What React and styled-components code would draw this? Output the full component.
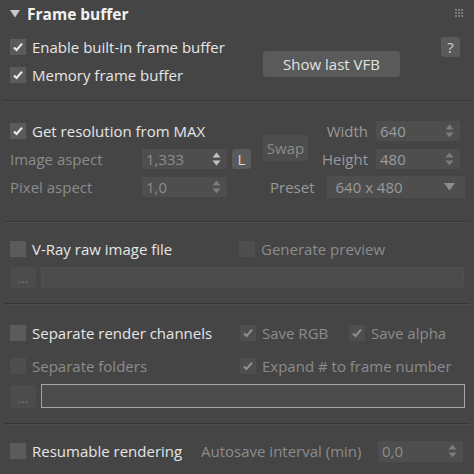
import React from 'react';
import styled, { createGlobalStyle } from 'styled-components';

const Global = createGlobalStyle`
  html, body { margin: 0; padding: 0; background: #454545; }
  body { font-family: "Open Sans", "Noto Sans", sans-serif; }
  * { box-sizing: border-box; }
`;

const Panel = styled.div`
  width: 474px;
  height: 474px;
  overflow: hidden;
  background: #454545;
  color: #e4e4e4;
  font-size: 15px;
  display: flex;
  flex-direction: column;
`;

const Header = styled.div`
  height: 28px;
  display: flex;
  align-items: center;
  padding: 0 10px;
  font-weight: 700;
  font-size: 15.5px;
  color: #f2f2f2;
  gap: 7px;
`;

const Grip = styled.svg`
  margin-left: auto;
  align-self: flex-start;
  margin-top: 9px;
`;

const Separator = styled.div`
  margin: 0 4px;
  height: 2px;
  border-top: 1px solid #363636;
  border-bottom: 1px solid #4d4d4d;
`;

const Section1 = styled.div`
  display: grid;
  grid-template-columns: 253px 137px 1fr;
  grid-template-rows: 28px 28px;
  padding: 5px 14px 11px 10px;
`;

const Section2 = styled.div`
  display: grid;
  grid-template-columns: 132px 85px 24px 12px 55px 58px 87px;
  grid-template-rows: 28px 28px 28px;
  padding: 15px 0 20px 10px;
`;

const Section3 = styled.div`
  display: grid;
  grid-template-rows: 28px 28px;
  padding: 12px 10px 12px 10px;
`;

const Section4 = styled.div`
  display: grid;
  grid-template-rows: 33px 33px 28px;
  padding: 11px 10px 13px 10px;
`;

const Section5 = styled.div`
  display: flex;
  align-items: center;
  height: 28px;
  margin-top: 12px;
  padding: 0 11px 0 10px;
`;

const Row = styled.div`
  display: flex;
  align-items: center;
`;

const CheckLabel = styled.label`
  display: flex;
  align-items: center;
  gap: 6px;
  color: ${p => (p.$disabled ? '#8c8c8c' : '#e6e6e6')};
  white-space: nowrap;
  width: ${p => (p.$w ? p.$w + 'px' : 'auto')};
  grid-column: ${p => p.$col || 'auto'};
  align-self: center;
`;

const Box = styled.span`
  width: 16px;
  height: 16px;
  flex: none;
  background: ${p => (p.$disabled ? '#4e4e4e' : '#5b5b5b')};
  display: flex;
  align-items: center;
  justify-content: center;
`;

const Check = ({ on, disabled }) => (
  <Box $disabled={disabled}>
    {on && (
      <svg width="12" height="12" viewBox="0 0 12 12">
        <path d="M2 6.4 L4.6 9 L10 2.6" fill="none" stroke={disabled ? '#8e8e8e' : '#ececec'} strokeWidth="2.1" />
      </svg>
    )}
  </Box>
);

const CheckBox = ({ on, disabled, children, w, col }) => (
  <CheckLabel $disabled={disabled} $w={w} $col={col}>
    <Check on={on} disabled={disabled} />
    {children}
  </CheckLabel>
);

const Button = styled.div`
  height: ${p => p.$h || 26}px;
  width: ${p => p.$w}px;
  background: ${p => (p.$disabled ? '#4d4d4d' : '#5a5a5a')};
  border-radius: 3px;
  color: ${p => (p.$disabled ? '#8a8a8a' : '#e2e2e2')};
  display: flex;
  align-items: center;
  justify-content: center;
  font-size: 15px;
`;

const ShowButton = styled(Button)`
  grid-column: 2;
  grid-row: 1 / 3;
  align-self: start;
  margin-top: 18px;
`;

const HelpButton = styled(Button)`
  grid-column: 3;
  grid-row: 1;
  justify-self: end;
  align-self: start;
  margin-top: 4px;
  color: #d0d0d0;
`;

const Label = styled.span`
  color: ${p => p.$color || '#8c8c8c'};
  white-space: nowrap;
  align-self: center;
  text-align: ${p => p.$align || 'left'};
  padding-right: ${p => p.$pr || 0}px;
  grid-column: ${p => p.$col || 'auto'};
`;

const Field = styled.div`
  height: ${p => p.$h || 20}px;
  width: ${p => p.$w}px;
  flex: none;
  background: #4e4e4e;
  display: flex;
  align-items: center;
  padding: 0 6px 0 4px;
  color: ${p => p.$color || '#8c8c8c'};
  align-self: center;
  grid-column: ${p => p.$col || 'auto'};
  margin-left: ${p => (p.$push ? 'auto' : '0')};
`;

const FieldText = styled.span`
  flex: 1;
`;

const Arrows = ({ color }) => (
  <svg width="9" height="14" viewBox="0 0 9 14">
    <path d="M4.5 0.5 L8.5 5.5 L0.5 5.5 Z" fill={color} />
    <path d="M0.5 8.5 L8.5 8.5 L4.5 13.5 Z" fill={color} />
  </svg>
);

const Spinner = ({ value, w, h, col, color, arrow, push }) => (
  <Field $w={w} $h={h} $col={col} $color={color} $push={push}>
    <FieldText>{value}</FieldText>
    <Arrows color={arrow || '#7c7c7c'} />
  </Field>
);

const LButton = styled(Button)`
  grid-column: 3;
  grid-row: 2;
  justify-self: end;
  align-self: center;
  color: #d8d8d8;
`;

const SwapButton = styled(Button)`
  grid-column: 5;
  grid-row: 1 / 3;
  align-self: center;
  margin-top: 6px;
`;

const PresetRow = styled.div`
  grid-column: 5 / 8;
  grid-row: 3;
  display: flex;
  align-items: center;
  padding-left: 7px;
  gap: 12px;
`;

const Dropdown = styled(Field)`
  padding: 0 10px 0 9px;
  height: 22px;
`;

const FileRow = styled.div`
  display: flex;
  align-items: center;
  gap: 5px;
`;

const DotsButton = styled.div`
  width: 26px;
  height: ${p => p.$h}px;
  background: #4c4c4c;
  border-radius: 3px;
  color: #7a7a7a;
  display: flex;
  align-items: flex-end;
  justify-content: center;
  padding-bottom: 3px;
  font-size: 13px;
  line-height: 1;
`;

const PathInput = styled.div`
  flex: 1;
  height: ${p => p.$h}px;
  background: #4b4b4b;
  border: ${p => (p.$bordered ? '1.5px solid #a6a6a6' : '1px solid #4f4f4f')};
  margin-right: ${p => p.$mr || 0}px;
`;

const TriangleIcon = () => (
  <svg width="10" height="8" viewBox="0 0 10 8">
    <path d="M0 0 L10 0 L5 7.5 Z" fill="#c8c8c8" />
  </svg>
);

const DropArrow = () => (
  <svg width="11" height="8" viewBox="0 0 11 8">
    <path d="M0 0 L11 0 L5.5 7.5 Z" fill="#8c8c8c" />
  </svg>
);

export default function App() {
  return (
    <>
      <Global />
      <Panel>
        <Header>
          <TriangleIcon />
          Frame buffer
          <Grip width="9" height="9" viewBox="0 0 9 9">
            {[0, 3, 6].map(y =>
              [0, 3, 6].map(x => <rect key={`${x}-${y}`} x={x} y={y} width="2" height="2" fill="#7a7a7a" />)
            )}
          </Grip>
        </Header>

        <Section1>
          <CheckBox on>Enable built-in frame buffer</CheckBox>
          <ShowButton $w={137}>Show last VFB</ShowButton>
          <HelpButton $w={19} $h={20}>?</HelpButton>
          <CheckBox on>Memory frame buffer</CheckBox>
        </Section1>
        <Separator />

        <Section2>
          <CheckBox on col="1 / 4">Get resolution from MAX</CheckBox>
          <SwapButton $w={45} $disabled>Swap</SwapButton>
          <Label $col={6} $align="right" $pr={8} $color="#999">Width</Label>
          <Spinner value="640" w={84} col={7} color="#9c9c9c" />

          <Label $col={1}>Image aspect</Label>
          <Spinner value="1,333" w={85} col={2} arrow="#c4c4c4" />
          <LButton $w={19} $h={20}>L</LButton>
          <Label $col={6} $align="right" $pr={8} $color="#999">Height</Label>
          <Spinner value="480" w={84} col={7} color="#9c9c9c" />

          <Label $col={1}>Pixel aspect</Label>
          <Spinner value="1,0" w={85} col={2} />
          <PresetRow>
            <Label $color="#999">Preset</Label>
            <Dropdown $w={138} $color="#999">
              <FieldText>640 x 480</FieldText>
              <DropArrow />
            </Dropdown>
          </PresetRow>
        </Section2>
        <Separator />

        <Section3>
          <Row>
            <CheckBox w={229}>V-Ray raw image file</CheckBox>
            <CheckBox disabled>Generate preview</CheckBox>
          </Row>
          <FileRow>
            <DotsButton $h={21}>...</DotsButton>
            <PathInput $h={21} />
          </FileRow>
        </Section3>
        <Separator />

        <Section4>
          <Row>
            <CheckBox w={230}>Separate render channels</CheckBox>
            <CheckBox on disabled w={109}>Save RGB</CheckBox>
            <CheckBox on disabled>Save alpha</CheckBox>
          </Row>
          <Row>
            <CheckBox disabled w={230}>Separate folders</CheckBox>
            <CheckBox on disabled>Expand # to frame number</CheckBox>
          </Row>
          <FileRow>
            <DotsButton $h={23}>...</DotsButton>
            <PathInput $h={24} $bordered $mr={-1} />
          </FileRow>
        </Section4>
        <Separator />

        <Section5>
          <CheckBox w={191}>Resumable rendering</CheckBox>
          <Label>Autosave interval (min)</Label>
          <Spinner value="0,0" w={85} h={21} push />
        </Section5>
      </Panel>
    </>
  );
}
